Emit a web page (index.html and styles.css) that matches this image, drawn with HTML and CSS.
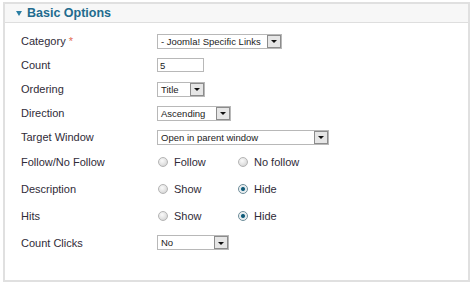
FILE: index.html
```html
<!DOCTYPE html>
<html>
<head>
<meta charset="utf-8">
<link rel="stylesheet" href="styles.css">
</head>
<body>
<div class="panel">
  <div class="panel-head">
    <span class="caret"></span>
    <span class="panel-title">Basic Options</span>
  </div>
  <div class="form">
    <div class="row">
      <div class="label">Category <span class="req">*</span></div>
      <div class="select w-cat"><span class="sel-text">- Joomla! Specific Links</span><span class="sel-btn"><span class="tri"></span></span></div>
    </div>
    <div class="row">
      <div class="label">Count</div>
      <div class="input w-count">5</div>
    </div>
    <div class="row">
      <div class="label">Ordering</div>
      <div class="select w-order"><span class="sel-text">Title</span><span class="sel-btn"><span class="tri"></span></span></div>
    </div>
    <div class="row">
      <div class="label">Direction</div>
      <div class="select w-dir"><span class="sel-text">Ascending</span><span class="sel-btn"><span class="tri"></span></span></div>
    </div>
    <div class="row">
      <div class="label">Target Window</div>
      <div class="select w-target"><span class="sel-text">Open in parent window</span><span class="sel-btn"><span class="tri"></span></span></div>
    </div>
    <div class="row r26">
      <div class="label">Follow/No Follow</div>
      <div class="radios">
        <span class="opt"><span class="radio"></span>Follow</span>
        <span class="opt"><span class="radio"></span>No follow</span>
      </div>
    </div>
    <div class="row r27">
      <div class="label">Description</div>
      <div class="radios">
        <span class="opt"><span class="radio"></span>Show</span>
        <span class="opt"><span class="radio on"></span>Hide</span>
      </div>
    </div>
    <div class="row r27">
      <div class="label">Hits</div>
      <div class="radios">
        <span class="opt"><span class="radio"></span>Show</span>
        <span class="opt"><span class="radio on"></span>Hide</span>
      </div>
    </div>
    <div class="row r27">
      <div class="label">Count Clicks</div>
      <div class="select w-clicks"><span class="sel-text">No</span><span class="sel-btn"><span class="tri"></span></span></div>
    </div>
  </div>
</div>
</body>
</html>
```

FILE: styles.css
```css
html, body {
  margin: 0;
  padding: 0;
  background: #ffffff;
}
body {
  padding: 2px 4px 2px 3px;
  font-family: "Liberation Sans", Arial, sans-serif;
  color: #333;
}
.panel {
  border: 2px solid #e0e0e0;
  height: 280px;
  box-sizing: border-box;
  background: #fff;
}
.panel-head {
  height: 18px;
  background: #f7f7f7;
  border-bottom: 1px solid #dedede;
  display: flex;
  align-items: center;
  padding-left: 11px;
}
.caret {
  width: 0;
  height: 0;
  border-left: 3.5px solid transparent;
  border-right: 3.5px solid transparent;
  border-top: 5px solid #2a7ea3;
  margin-right: 5px;
  margin-top: 1px;
}
.panel-title {
  font-size: 12.5px;
  font-weight: bold;
  color: #226b8e;
}
.form {
  padding: 6px 0 0 16px;
}
.row {
  display: grid;
  grid-template-columns: 136px 1fr;
  align-items: center;
  height: 24px;
}
.r26 { height: 26px; }
.r27 { height: 27px; }
.label {
  font-size: 11px;
  color: #2f2b38;
}
.req {
  color: #e36b52;
}
.select, .input {
  height: 15px;
  border: 1px solid #b8b8b8;
  box-sizing: border-box;
  display: flex;
  align-items: center;
  background: #fff;
  font-size: 9.5px;
  color: #222;
}
.input {
  height: 14px;
  padding-left: 2px;
}
.sel-text {
  flex: 1;
  padding-left: 3px;
  white-space: nowrap;
  overflow: hidden;
}
.sel-btn {
  width: 14px;
  height: 13px;
  box-sizing: border-box;
  border: 1px solid #8c8c8c;
  background: #e6e6e6;
  display: flex;
  align-items: center;
  justify-content: center;
}
.tri {
  width: 0;
  height: 0;
  border-left: 3px solid transparent;
  border-right: 3px solid transparent;
  border-top: 3px solid #111;
  margin-top: 1px;
}
.w-cat { width: 125px; }
.w-count { width: 47px; }
.w-order { width: 48px; }
.w-dir { width: 74px; }
.w-target { width: 172px; }
.w-clicks { width: 72px; }
.radios {
  display: flex;
  align-items: center;
}
.opt {
  display: inline-flex;
  align-items: center;
  font-size: 11px;
  color: #2f2b38;
  width: 79px;
  margin-left: 1px;
}
.radio {
  width: 10px;
  height: 10px;
  border-radius: 50%;
  box-sizing: border-box;
  border: 1px solid #b4b4b4;
  background: radial-gradient(circle at 40% 35%, #fafafa 0%, #e2e2e2 55%, #c8c8c8 100%);
  margin-right: 6px;
  flex: none;
}
.radio.on {
  border-color: #6d8d9a;
  background: radial-gradient(circle at 50% 50%, #0f4a63 0%, #1d6a88 30%, #dfe8ec 42%, #f2f2f2 70%, #cfcfcf 100%);
}
```
